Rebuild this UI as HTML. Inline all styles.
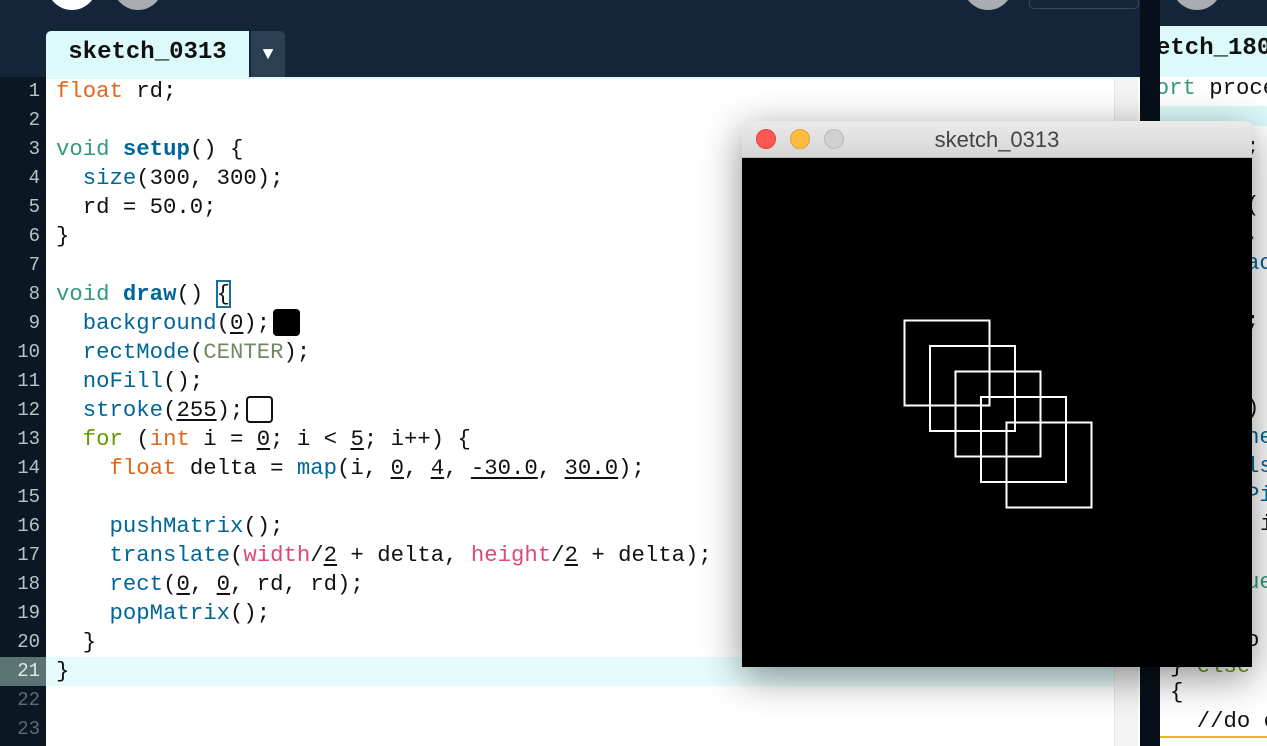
<!DOCTYPE html>
<html><head><meta charset="utf-8"><style>
*{margin:0;padding:0;box-sizing:border-box}
body{width:1267px;height:746px;overflow:hidden;background:#142539;position:relative;font-family:"Liberation Mono",monospace}
.abs{position:absolute}
.gut{left:0;top:77px;width:46px;height:669px;background:#0b1723}
.ln{position:absolute;left:0;width:40px;text-align:right;font-size:19px;color:#b8c4c8;height:29px;line-height:29px}
.code{position:absolute;left:56px;font-size:22.3px;height:29px;line-height:29px;color:#111;white-space:pre}
.k{color:#e2661a}.v{color:#33997e}.f{color:#006699;font-weight:bold}.b{color:#006699}.c{color:#718a62}.g{color:#669900}.p{color:#d94a7a}
u{text-decoration-thickness:2px;text-underline-offset:3px}
.rw{position:absolute;left:1160px;top:0;width:107px;height:746px;overflow:hidden}
.rc{position:absolute;font-size:22.3px;height:29px;line-height:29px;white-space:pre;color:#111}
</style></head><body>
<div class="abs" style="left:47px;top:-40px;width:50px;height:50px;border-radius:50%;background:#fff"></div>
<div class="abs" style="left:113px;top:-40px;width:50px;height:50px;border-radius:50%;background:#a9acb0"></div>
<div class="abs" style="left:963px;top:-40px;width:50px;height:50px;border-radius:50%;background:#a9acb0"></div>
<div class="abs" style="left:1029px;top:-20px;width:110px;height:29px;border-radius:5px;border:1.5px solid #3a4a5c"></div>
<div class="abs" style="left:46px;top:31px;width:203px;height:47px;background:#dcfafa;border-radius:5px 0 0 0;font-size:24px;font-weight:bold;text-align:center;line-height:44px;color:#111">sketch_0313</div>
<div class="abs" style="left:251px;top:31px;width:34px;height:46px;background:#2c3e51;border-radius:0 5px 0 0;color:#fff;font-size:18px;text-align:center;line-height:48px">▼</div>
<div class="abs" style="left:46px;top:77px;width:1094px;height:669px;background:#fff;border-top:2px solid #dcfafa"></div>
<div class="abs" style="left:1114px;top:79px;width:24px;height:667px;background:#f4f4f4;border-left:1px solid #e6e6e6"></div>
<div class="abs" style="left:46px;top:657px;width:1068px;height:29px;background:#e6fcfc"></div>
<div class="abs gut"></div>
<div class="abs" style="left:0;top:657px;width:46px;height:29px;background:#5a7474"></div>
<div class="ln" style="top:77px">1</div><div class="ln" style="top:106px">2</div><div class="ln" style="top:135px">3</div><div class="ln" style="top:164px">4</div><div class="ln" style="top:193px">5</div><div class="ln" style="top:222px">6</div><div class="ln" style="top:251px">7</div><div class="ln" style="top:280px">8</div><div class="ln" style="top:309px">9</div><div class="ln" style="top:338px">10</div><div class="ln" style="top:367px">11</div><div class="ln" style="top:396px">12</div><div class="ln" style="top:425px">13</div><div class="ln" style="top:454px">14</div><div class="ln" style="top:483px">15</div><div class="ln" style="top:512px">16</div><div class="ln" style="top:541px">17</div><div class="ln" style="top:570px">18</div><div class="ln" style="top:599px">19</div><div class="ln" style="top:628px">20</div><div class="ln" style="top:657px;color:#dfe8e8">21</div><div class="ln" style="top:686px;color:#5c6a72">22</div><div class="ln" style="top:715px;color:#5c6a72">23</div>

<div class="code" style="top:77px"><span class="k">float</span> rd;</div>
<div class="code" style="top:135px"><span class="v">void</span> <span class="f">setup</span>() {</div>
<div class="code" style="top:164px">  <span class="b">size</span>(300, 300);</div>
<div class="code" style="top:193px">  rd = 50.0;</div>
<div class="code" style="top:222px">}</div>
<div class="code" style="top:280px"><span class="v">void</span> <span class="f">draw</span>() <span style="outline:2px solid #1a6ea0;outline-offset:-1px">{</span></div>
<div class="code" style="top:309px">  <span class="b">background</span>(<u>0</u>);</div>
<div class="abs" style="left:273px;top:309px;width:27px;height:27px;background:#000;border-radius:4px"></div>
<div class="code" style="top:338px">  <span class="b">rectMode</span>(<span class="c">CENTER</span>);</div>
<div class="code" style="top:367px">  <span class="b">noFill</span>();</div>
<div class="code" style="top:396px">  <span class="b">stroke</span>(<u>255</u>);</div>
<div class="abs" style="left:246px;top:396px;width:27px;height:27px;background:#fff;border:2px solid #111;border-radius:4px"></div>
<div class="code" style="top:425px">  <span class="g">for</span> (<span class="k">int</span> i = <u>0</u>; i &lt; <u>5</u>; i++) {</div>
<div class="code" style="top:454px">    <span class="k">float</span> delta = <span class="b">map</span>(i, <u>0</u>, <u>4</u>, <u>-30.0</u>, <u>30.0</u>);</div>
<div class="code" style="top:512px">    <span class="b">pushMatrix</span>();</div>
<div class="code" style="top:541px">    <span class="b">translate</span>(<span class="p">width</span>/<u>2</u> + delta, <span class="p">height</span>/<u>2</u> + delta);</div>
<div class="code" style="top:570px">    <span class="b">rect</span>(<u>0</u>, <u>0</u>, rd, rd);</div>
<div class="code" style="top:599px">    <span class="b">popMatrix</span>();</div>
<div class="code" style="top:628px">  }</div>
<div class="code" style="top:657px">}</div>

<div class="abs" style="left:1140px;top:0;width:20px;height:746px;background:#07101a"></div>
<div class="abs" style="left:1172px;top:-40px;width:50px;height:50px;border-radius:50%;background:#a9acb0"></div>
<div class="rw">
<div class="abs" style="left:0;top:26px;width:107px;height:51px;background:#dcfafa"></div>
<div class="abs" style="left:0;top:77px;width:107px;height:669px;background:#fff"></div>
<div class="abs" style="left:0;top:106px;width:107px;height:20px;background:#dcfafa"></div>
<div class="rc" style="top:34px;font-weight:bold;font-size:24px;left:-4px">etch_180</div>
<div class="rc" style="top:74px;left:-31px"><span class="v">mport</span> proce</div>
<div class="rc" style="top:133px;left:86px">;</div>
<div class="rc" style="top:191px;left:86px">(</div>
<div class="rc" style="top:220px;left:86px">,</div>
<div class="rc" style="top:249px;left:86px"><span class="b">ac</span></div>
<div class="rc" style="top:307px;left:86px">;</div>
<div class="rc" style="top:394px;left:86px">)</div>
<div class="rc" style="top:423px;left:86px"><span class="b">ne</span></div>
<div class="rc" style="top:452px;left:86px"><span class="b">ls</span></div>
<div class="rc" style="top:481px;left:86px"><span class="b">Pi</span></div>
<div class="rc" style="top:510px;left:100px">i</div>
<div class="rc" style="top:568px;left:86px"><span class="v">ue</span></div>
<div class="rc" style="top:626px;left:86px">o</div>
<div class="rc" style="top:652px;left:10px">} <span class="g">else</span></div>
<div class="rc" style="top:678px;left:10px">{</div>
<div class="rc" style="top:707px;left:10px">  //do c</div>
<div class="abs" style="left:0;top:736px;width:107px;height:2px;background:#e8b820"></div>
</div>

<div class="abs" style="left:742px;top:121px;width:510px;height:546px;box-shadow:0 10px 40px rgba(0,0,0,.45);border-radius:6px 6px 0 0"></div>
<div class="abs" style="left:742px;top:121px;width:510px;height:37px;background:linear-gradient(#ebebeb,#d6d6d6);border-radius:6px 6px 0 0;border-bottom:1px solid #b0b0b0;font-family:'Liberation Sans',sans-serif;font-size:22px;color:#444;text-align:center;line-height:37px">sketch_0313</div>
<div class="abs" style="left:756px;top:129px;width:20px;height:20px;border-radius:50%;background:#fc5753;border:1px solid #de4440"></div>
<div class="abs" style="left:790px;top:129px;width:20px;height:20px;border-radius:50%;background:#fdbc40;border:1px solid #de9f34"></div>
<div class="abs" style="left:824px;top:129px;width:20px;height:20px;border-radius:50%;background:#d0d0d0;border:1px solid #bbb"></div>
<div class="abs" style="left:742px;top:158px;width:510px;height:509px;background:#000"></div>
<svg class="abs" style="left:742px;top:158px" width="510" height="509">
<g fill="none" stroke="#fff" stroke-width="2">
<rect x="162.5" y="162.5" width="85" height="85"/>
<rect x="188" y="188" width="85" height="85"/>
<rect x="213.5" y="213.5" width="85" height="85"/>
<rect x="239" y="239" width="85" height="85"/>
<rect x="264.5" y="264.5" width="85" height="85"/>
</g></svg>
</body></html>
